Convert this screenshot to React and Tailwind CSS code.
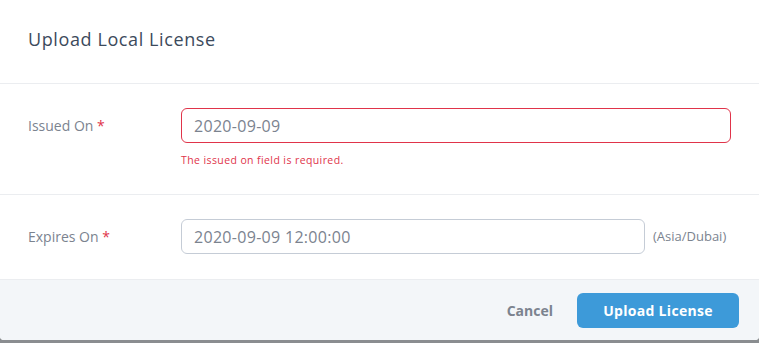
import React from 'react';

export default function App() {
    return (
        <div className="w-[759px] h-[343px] bg-[#8a8d90] overflow-hidden" style={{ fontFamily: '"Open Sans", Lato, sans-serif' }}>
            <div className="bg-white rounded-b-[4px] overflow-hidden h-[340px] flex flex-col">
                <div className="h-[84px] px-7 flex items-center border-b border-[#ebedf0]">
                    <h1 className="text-[18px] tracking-[0.6px] text-[#3c4a5c] pb-1">Upload Local License</h1>
                </div>

                <div className="pt-6 pb-[27px] border-b border-[#ebedf0]">
                    <div className="flex items-start px-7">
                        <label className="w-[153px] shrink-0 text-[14px] text-[#7b838f] leading-[35px]">
                            Issued On <span className="text-[#e0344a]">*</span>
                        </label>
                        <div className="flex-1 min-w-0">
                            <input
                                readOnly
                                value="2020-09-09"
                                className="w-full h-[35px] px-3 rounded-[6px] border border-[#e0344a] text-[16px] tracking-[0.3px] text-[#7b838f] outline-none"
                            />
                            <p className="mt-[10px] text-[10.5px] tracking-[0.4px] text-[#e0344a] leading-[14px]">The issued on field is required.</p>
                        </div>
                    </div>
                </div>

                <div className="pt-6 pb-[25px] border-b border-[#ebedf0]">
                    <div className="flex items-center px-7">
                        <label className="w-[153px] shrink-0 text-[14px] text-[#7b838f] leading-[35px]">
                            Expires On <span className="text-[#e0344a]">*</span>
                        </label>
                        <input
                            readOnly
                            value="2020-09-09 12:00:00"
                            className="w-[464px] h-[35px] px-3 rounded-[6px] border border-[#c5ccd6] text-[16px] tracking-[0.3px] text-[#7b838f] outline-none"
                        />
                        <span className="ml-2 text-[13px] text-[#7b838f]">(Asia/Dubai)</span>
                    </div>
                </div>

                <div className="flex-1 bg-[#f3f6f9] flex items-center justify-end gap-6 px-5">
                    <button className="text-[14px] font-bold text-[#7b838f]">Cancel</button>
                    <button className="w-[162px] h-[35px] rounded-[6px] bg-[#3d9ad9] text-white text-[14px] font-bold tracking-[0.3px]">Upload License</button>
                </div>
            </div>
        </div>
    );
}
